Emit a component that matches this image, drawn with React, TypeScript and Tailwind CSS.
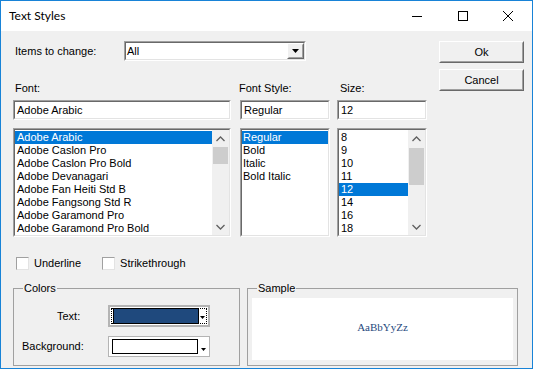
import React from 'react';

const fonts = [
  'Adobe Arabic',
  'Adobe Caslon Pro',
  'Adobe Caslon Pro Bold',
  'Adobe Devanagari',
  'Adobe Fan Heiti Std B',
  'Adobe Fangsong Std R',
  'Adobe Garamond Pro',
  'Adobe Garamond Pro Bold',
];
const fontStyles = ['Regular', 'Bold', 'Italic', 'Bold Italic'];
const sizes = ['8', '9', '10', '11', '12', '14', '16', '18'];

function Sunken({ className = '', children }: { className?: string; children?: React.ReactNode }) {
  return (
    <div className={`border border-t-[#a0a0a0] border-l-[#a0a0a0] border-r-white border-b-white ${className}`}>
      <div className="flex h-full w-full border border-t-[#696969] border-l-[#696969] border-r-[#e3e3e3] border-b-[#e3e3e3] bg-white">
        {children}
      </div>
    </div>
  );
}

function Raised({ className = '', children }: { className?: string; children?: React.ReactNode }) {
  return (
    <div className={`border border-t-white border-l-white border-r-[#696969] border-b-[#696969] ${className}`}>
      <div className="flex h-full w-full items-center justify-center border border-t-[#f0f0f0] border-l-[#f0f0f0] border-r-[#a0a0a0] border-b-[#a0a0a0] bg-[#f0f0f0]">
        {children}
      </div>
    </div>
  );
}

function Chevron({ up }: { up?: boolean }) {
  return (
    <svg width="9" height="6" viewBox="0 0 9 6">
      <polyline
        points={up ? '0.5,5 4.5,1 8.5,5' : '0.5,1 4.5,5 8.5,1'}
        fill="none"
        stroke="#606060"
        strokeWidth="1.3"
      />
    </svg>
  );
}

function Scrollbar({ thumb }: { thumb: string }) {
  return (
    <div className="flex w-[17px] flex-col bg-[#f0f0f0]">
      <div className="flex h-[17px] items-center justify-center">
        <Chevron up />
      </div>
      <div className="flex-1 px-[1px]">
        <div className={`bg-[#cdcdcd] ${thumb}`} />
      </div>
      <div className="flex h-[17px] items-center justify-center">
        <Chevron />
      </div>
    </div>
  );
}

function Row({ text, selected, className = '' }: { text: string; selected?: boolean; className?: string }) {
  return (
    <div className={`h-[13px] leading-[13px] whitespace-nowrap ${selected ? 'bg-[#0078d7] text-white' : ''} ${className}`}>
      {text}
    </div>
  );
}

function Arrow({ small }: { small?: boolean }) {
  return small ? (
    <svg width="5" height="3" viewBox="0 0 5 3">
      <polygon points="0,0 5,0 2.5,3" fill="#000" />
    </svg>
  ) : (
    <svg width="7" height="4" viewBox="0 0 7 4">
      <polygon points="0,0 7,0 3.5,4" fill="#000" />
    </svg>
  );
}

function CheckBox({ label }: { label: string }) {
  return (
    <div className="flex items-center">
      <div className="h-[13px] w-[13px] border border-t-[#a0a0a0] border-l-[#a0a0a0] border-r-[#e3e3e3] border-b-[#e3e3e3] bg-white" />
      <span className="ml-[5px] leading-[13px]">{label}</span>
    </div>
  );
}

export default function App() {
  return (
    <div className="flex h-[369px] w-[533px] flex-col overflow-hidden border border-[#1883d7] bg-[#f0f0f0] font-['Liberation_Sans',Arial,sans-serif] text-[11px] text-black">
      {/* Title bar */}
      <div className="flex h-[30px] shrink-0 items-center bg-white">
        <span className="pl-[8px] font-['Lato',sans-serif] text-[12px]">Text Styles</span>
        <div className="ml-auto flex items-center">
          <div className="flex w-[46px] items-center justify-center">
            <div className="h-[1px] w-[10px] bg-black" />
          </div>
          <div className="flex w-[46px] items-center justify-center">
            <div className="h-[10px] w-[10px] border border-black" />
          </div>
          <div className="flex w-[46px] items-center justify-center pr-[2px]">
            <svg width="10" height="10" viewBox="0 0 10 10">
              <path d="M0 0L10 10M10 0L0 10" stroke="#000" strokeWidth="1" />
            </svg>
          </div>
        </div>
      </div>

      {/* Body */}
      <div className="flex flex-1 flex-col pl-[12px]">
        <div className="flex pt-[10px]">
          {/* Left area */}
          <div className="flex w-[414px] flex-col">
            <div className="flex items-center">
              <span className="w-[111px] pl-[2px]">Items to change:</span>
              <Sunken className="h-[20px] w-[182px]">
                <span className="flex-1 pl-[1px] leading-[16px]">All</span>
                <Raised className="h-full w-[17px]">
                  <Arrow />
                </Raised>
              </Sunken>
            </div>

            <div className="mt-[21px] flex leading-[13px]">
              <span className="w-[226px] pl-[2px]">Font:</span>
              <span className="w-[100px]">Font Style:</span>
              <span className="pl-[1px]">Size:</span>
            </div>

            <div className="mt-[5px] flex">
              <Sunken className="h-[20px] w-[218px]">
                <span className="flex items-center pl-[2px]">Adobe Arabic</span>
              </Sunken>
              <Sunken className="ml-[9px] h-[20px] w-[90px]">
                <span className="flex items-center pl-[2px]">Regular</span>
              </Sunken>
              <Sunken className="ml-[7px] h-[20px] w-[90px]">
                <span className="flex items-center pl-[2px]">12</span>
              </Sunken>
            </div>

            <div className="mt-[8px] flex">
              <Sunken className="h-[109px] w-[218px]">
                <div className="flex-1 pt-[1px]">
                  {fonts.map((f, i) => (
                    <Row key={f} text={f} selected={i === 0} className="pl-[2px]" />
                  ))}
                </div>
                <Scrollbar thumb="h-[17px]" />
              </Sunken>
              <Sunken className="ml-[9px] h-[109px] w-[90px]">
                <div className="flex-1 pt-[1px]">
                  {fontStyles.map((f, i) => (
                    <Row key={f} text={f} selected={i === 0} className="pl-[1px]" />
                  ))}
                </div>
              </Sunken>
              <Sunken className="ml-[7px] h-[109px] w-[90px]">
                <div className="flex-1 pt-[1px]">
                  {sizes.map((s) => (
                    <Row key={s} text={s} selected={s === '12'} className="pl-[2px]" />
                  ))}
                </div>
                <Scrollbar thumb="mt-[1px] h-[37px]" />
              </Sunken>
            </div>
          </div>

          {/* Buttons */}
          <div className="ml-[12px] flex flex-col gap-[6px]">
            <Raised className="h-[22px] w-[85px]">Ok</Raised>
            <Raised className="h-[22px] w-[85px]">Cancel</Raised>
          </div>
        </div>

        <div className="mt-[20px] flex gap-[21px] pl-[3px]">
          <CheckBox label="Underline" />
          <CheckBox label="Strikethrough" />
        </div>

        <div className="mt-[12px] flex gap-[7px]">
          <fieldset className="h-[84px] w-[227px] border border-[#a0a0a0]">
            <legend className="ml-[9px] px-[1px] leading-[13px]">Colors</legend>
            <div className="mt-[10px] flex items-center">
              <span className="w-[94px] pl-[43px]">Text:</span>
              <div className="flex h-[22px] w-[102px] border-2 border-[#b4b4b4] bg-white p-[1px]">
                <div className="flex flex-1 items-center border border-dotted border-black">
                  <div className="ml-[1px] h-[16px] w-[86px] border border-black bg-[#1f497d]" />
                  <div className="flex flex-1 items-end justify-center pb-[4px] self-stretch">
                    <Arrow small />
                  </div>
                </div>
              </div>
            </div>
            <div className="mt-[9px] flex items-center">
              <span className="w-[94px] pl-[8px]">Background:</span>
              <div className="flex h-[21px] w-[102px] items-center border border-[#b4b4b4] bg-white pl-[3px]">
                <div className="h-[15px] w-[86px] border border-black bg-white" />
                <div className="flex flex-1 items-end justify-center self-stretch pb-[5px]">
                  <Arrow small />
                </div>
              </div>
            </div>
          </fieldset>

          <fieldset className="h-[84px] w-[271px] border border-[#a0a0a0]">
            <legend className="ml-[9px] px-[1px] leading-[13px]">Sample</legend>
            <div className="mx-[4px] mt-[3px] flex h-[62px] items-center justify-center bg-white">
              <span className="pb-[3px] font-['Liberation_Serif',serif] text-[11px] text-[#1f497d]">AaBbYyZz</span>
            </div>
          </fieldset>
        </div>
      </div>
    </div>
  );
}
